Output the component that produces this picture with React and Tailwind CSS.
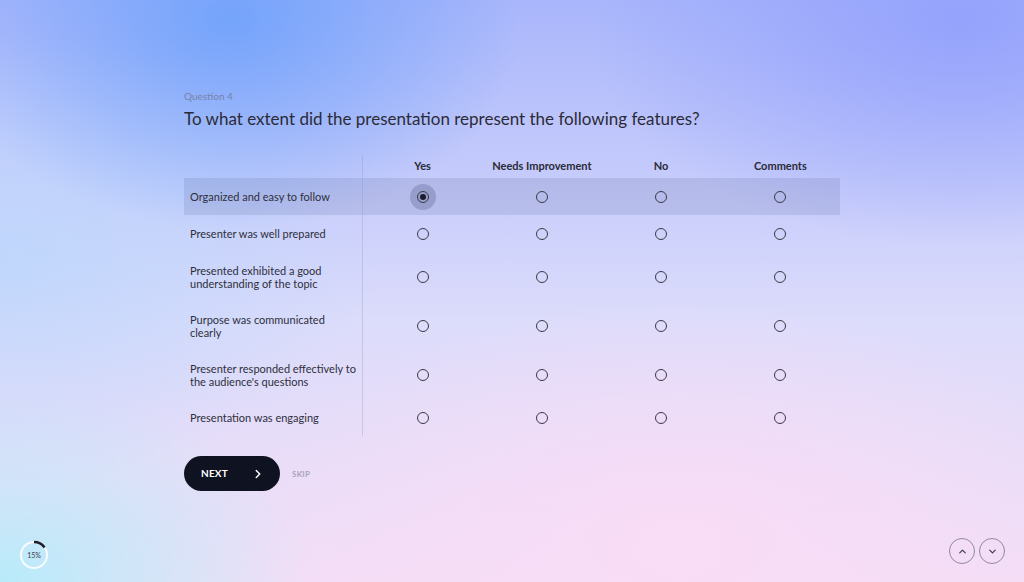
import { ChevronRight, ChevronUp, ChevronDown } from 'lucide-react';

const columns = ['Yes', 'Needs Improvement', 'No', 'Comments'];

const rows = [
  { label: 'Organized and easy to follow', selected: 0 },
  { label: 'Presenter was well prepared' },
  { label: 'Presented exhibited a good understanding of the topic', tall: true },
  { label: 'Purpose was communicated clearly', tall: true },
  { label: "Presenter responded effectively to the audience's questions", tall: true },
  { label: 'Presentation was engaging' },
];

function Radio({ checked }) {
  return (
    <div className="relative flex h-[26px] w-[26px] items-center justify-center">
      {checked && <div className="absolute inset-0 rounded-full bg-[#3c4470]/25" />}
      <div className="relative flex h-[12px] w-[12px] items-center justify-center rounded-full border border-[#3a3a48]">
        {checked && <div className="h-[6px] w-[6px] rounded-full bg-[#1c1c28]" />}
      </div>
    </div>
  );
}

function ProgressRing({ percent }) {
  const r = 13;
  const c = 2 * Math.PI * r;
  return (
    <div className="relative h-[32px] w-[32px]">
      <svg width="32" height="32" viewBox="0 0 32 32" className="-rotate-90">
        <circle cx="16" cy="16" r={r} fill="none" stroke="rgba(255,255,255,0.85)" strokeWidth="2" />
        <circle
          cx="16"
          cy="16"
          r={r}
          fill="none"
          stroke="#1f1f2a"
          strokeWidth="2.5"
          strokeDasharray={`${(c * percent) / 100} ${c}`}
        />
      </svg>
      <div className="absolute inset-0 flex items-center justify-center text-[7px] text-[#3a3a48]">
        {percent}%
      </div>
    </div>
  );
}

export default function App() {
  return (
    <div
      className="relative h-[582px] w-full overflow-hidden bg-[#dcdcfb] font-['Lato',sans-serif] text-[#2b2b38]"
      style={{
        background:
          'radial-gradient(ellipse 420px 300px at 230px 20px, rgba(106,160,251,0.85), transparent 70%),' +
          'radial-gradient(ellipse 500px 300px at 960px 20px, rgba(146,160,252,0.9), transparent 75%),' +
          'radial-gradient(ellipse 420px 260px at 0px 582px, rgba(180,236,250,0.95), transparent 75%),' +
          'radial-gradient(ellipse 600px 320px at 680px 540px, rgba(250,220,246,0.95), transparent 75%),' +
          'radial-gradient(ellipse 500px 300px at 0px 260px, rgba(190,215,252,0.9), transparent 75%),' +
          'linear-gradient(180deg, #a9b6fb 0%, #dcdcfb 55%, #f3def6 100%)',
      }}
    >
      <div className="pl-[184px] pt-[90px]">
        <div className="text-[10px] leading-[13px] text-[#6f7390]/80">Question 4</div>
        <h1 className="mt-[4px] text-[17px] leading-[24px] text-[#2b2b38]">
          To what extent did the presentation represent the following features?
        </h1>

        <div className="mt-[24px] grid w-[656px] grid-cols-[179px_repeat(4,1fr)]">
          <div className="h-[23px] border-r border-[#8a93b8]/30" />
          {columns.map((col) => (
            <div key={col} className="flex h-[22px] items-center justify-center text-[11px] font-bold text-[#2b2b38]">
              {col}
            </div>
          ))}

          {rows.map((row) => {
            const hl = row.selected !== undefined ? 'bg-[#4a5490]/15' : '';
            return (
              <div key={row.label} className="contents">
                <div
                  className={`flex items-center border-r border-[#8a93b8]/30 py-[11.5px] pl-[6px] text-[11px] leading-[13px] text-[#2f2f3c] ${hl} ${
                    row.tall ? 'min-h-[49px]' : 'min-h-[37px]'
                  }`}
                >
                  <span className="max-w-[167px]">{row.label}</span>
                </div>
                {columns.map((col, j) => (
                  <div key={col} className={`flex items-center justify-center ${hl}`}>
                    <Radio checked={row.selected === j} />
                  </div>
                ))}
              </div>
            );
          })}
        </div>

        <div className="mt-[20px] flex items-center gap-[12px]">
          <button className="flex h-[35px] w-[96px] items-center justify-between rounded-full bg-[#0f1220] pl-[17px] pr-[15px] text-[10px] font-bold tracking-[0.02em] text-white">
            NEXT
            <ChevronRight size={14} strokeWidth={2.5} />
          </button>
          <span className="text-[8px] font-bold tracking-[0.03em] text-[#a7a3c0]">SKIP</span>
        </div>
      </div>

      <div className="absolute bottom-[11px] left-[18px]">
        <ProgressRing percent={15} />
      </div>

      <div className="absolute bottom-[18px] right-[19px] flex gap-[4px]">
        <button className="flex h-[26px] w-[26px] items-center justify-center rounded-full border border-[#8e8aa0] text-[#3a3a48]">
          <ChevronUp size={11} strokeWidth={2.5} />
        </button>
        <button className="flex h-[26px] w-[26px] items-center justify-center rounded-full border border-[#8e8aa0] text-[#3a3a48]">
          <ChevronDown size={11} strokeWidth={2.5} />
        </button>
      </div>
    </div>
  );
}
